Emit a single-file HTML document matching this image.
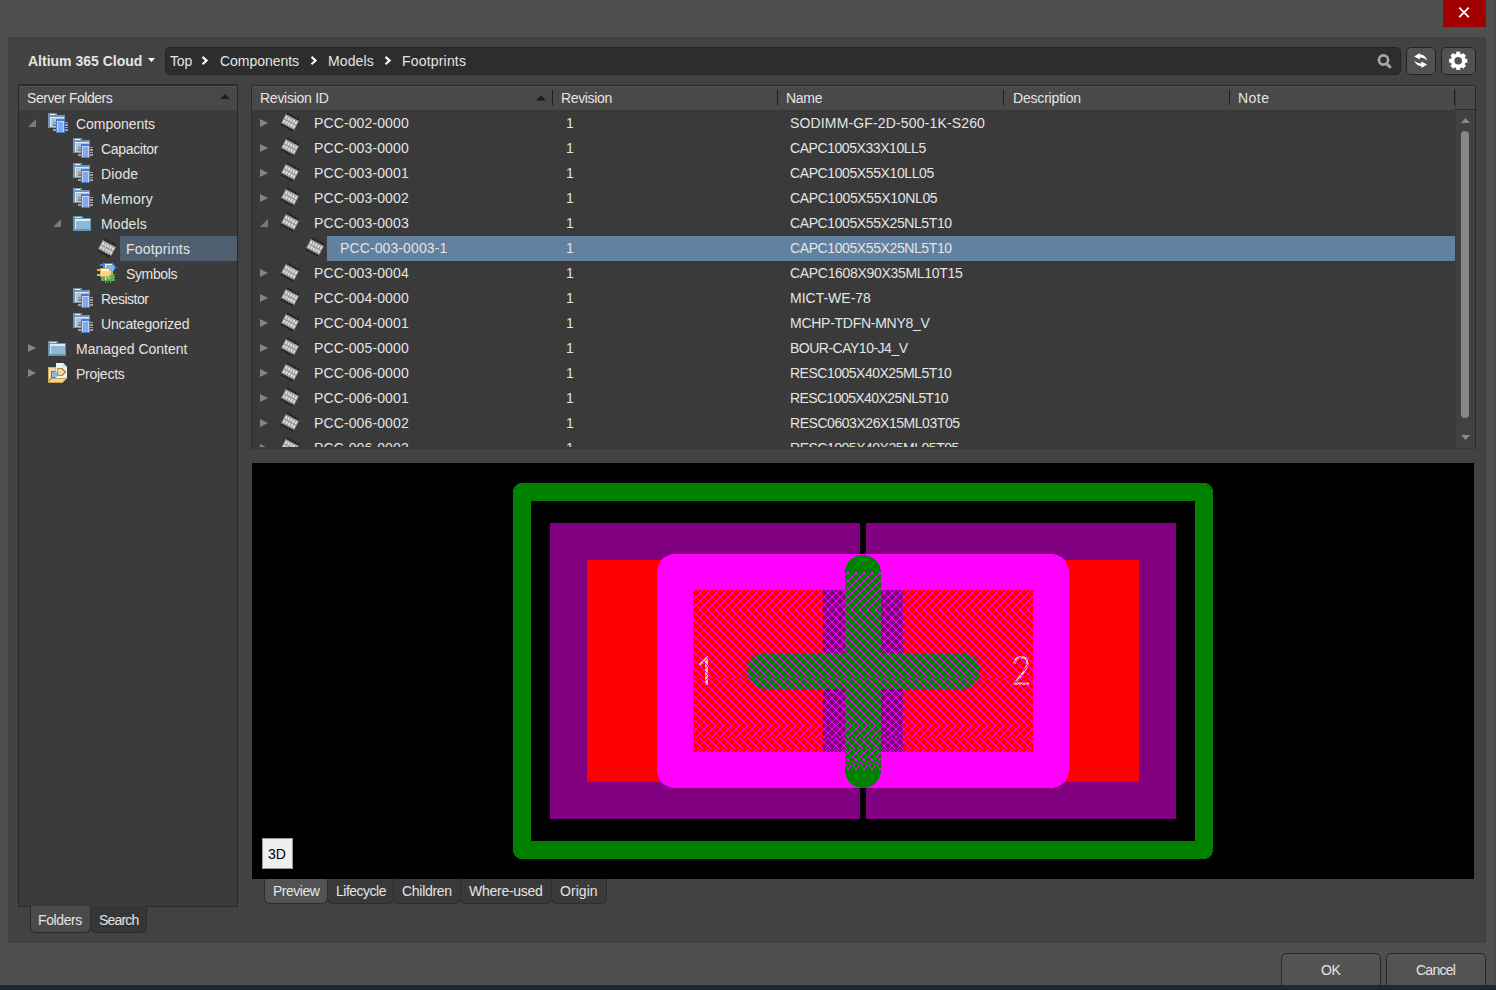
<!DOCTYPE html><html><head><meta charset="utf-8"><style>
html,body{margin:0;padding:0;}
body{width:1496px;height:990px;position:relative;overflow:hidden;background:#4f4f4f;font-family:"Liberation Sans",sans-serif;font-size:14px;}
.t{position:absolute;white-space:nowrap;line-height:20px;height:20px;}
svg{display:block}
</style></head><body><div style="position:absolute;left:0px;top:985px;width:1496px;height:5px;background:#1d2a2e"></div><div style="position:absolute;left:1494px;top:0px;width:2px;height:985px;background:#474747"></div><div style="position:absolute;left:1443px;top:0px;width:43px;height:27px;background:#a00000"></div><svg style="position:absolute;left:1443px;top:0" width="43" height="27"><path d="M16.2 7.6L25.8 17.2M25.8 7.6L16.2 17.2" stroke="#fff" stroke-width="1.8"/></svg><div style="position:absolute;left:8px;top:37px;width:1478px;height:906px;background:#424242"></div><div class="t" style="left:28px;top:51.15px;color:#e4e4e4;font-size:14px;font-weight:bold;letter-spacing:0.0px;">Altium 365 Cloud</div><svg style="position:absolute;left:148px;top:58px" width="7" height="5"><path d="M0 0H7L3.5 4Z" fill="#fff"/></svg><div style="position:absolute;left:165px;top:47px;width:1236px;height:28px;background:#2d2d2d;border:1px solid #242424;border-radius:5px;box-sizing:border-box"></div><div class="t" style="left:170px;top:51.15px;color:#e4e4e4;font-size:14px;font-weight:normal;letter-spacing:-0.2px;">Top</div><svg style="position:absolute;left:201px;top:56px" width="9" height="11"><path d="M1.5 0.9L5.6 4.6L1.5 8.3" stroke="#f4f4f4" stroke-width="2.2" fill="none"/></svg><svg style="position:absolute;left:309.5px;top:56px" width="9" height="11"><path d="M1.5 0.9L5.6 4.6L1.5 8.3" stroke="#f4f4f4" stroke-width="2.2" fill="none"/></svg><svg style="position:absolute;left:383.5px;top:56px" width="9" height="11"><path d="M1.5 0.9L5.6 4.6L1.5 8.3" stroke="#f4f4f4" stroke-width="2.2" fill="none"/></svg><div class="t" style="left:220px;top:51.15px;color:#e4e4e4;font-size:14px;font-weight:normal;letter-spacing:-0.033px;">Components</div><div class="t" style="left:328px;top:51.15px;color:#e4e4e4;font-size:14px;font-weight:normal;letter-spacing:0.12px;">Models</div><div class="t" style="left:402px;top:51.15px;color:#e4e4e4;font-size:14px;font-weight:normal;letter-spacing:0.189px;">Footprints</div><svg style="position:absolute;left:1374px;top:51px" width="20" height="20"><circle cx="9.5" cy="9" r="4.6" stroke="#a8a8a8" stroke-width="2.6" fill="none"/><path d="M12.5 12.5L16 16" stroke="#a8a8a8" stroke-width="3" stroke-linecap="round"/></svg><div style="position:absolute;left:1406px;top:47px;width:30px;height:28px;background:#525252;border:1px solid #222;border-radius:5px;box-sizing:border-box"></div><svg style="position:absolute;left:1406px;top:47px" width="30" height="28">
<path d="M8.2 9.4L13.8 5.9V12.5Z" fill="#fff"/>
<path d="M13 7.4C16.8 7.2 20 8.8 21.2 13.8C19.6 11.4 17 10.2 13 10.4Z" fill="#fff"/>
<path d="M21.1 17.4L15.4 14.6V21Z" fill="#fff"/>
<path d="M8.2 13.2C9.2 17 11.8 18.8 16 19.2V16.5C12.6 16.4 10 15.8 8.2 13.2Z" fill="#fff"/>
</svg><div style="position:absolute;left:1441px;top:47px;width:35px;height:28px;background:#525252;border:1px solid #222;border-radius:5px;box-sizing:border-box"></div><svg style="position:absolute;left:1441px;top:47px" width="35" height="28"><g transform="translate(17.2 13.8)" fill="#fff"><circle r="7.4"/><rect x="-2" y="-9.1" width="4" height="4" transform="rotate(0)"/><rect x="-2" y="-9.1" width="4" height="4" transform="rotate(45)"/><rect x="-2" y="-9.1" width="4" height="4" transform="rotate(90)"/><rect x="-2" y="-9.1" width="4" height="4" transform="rotate(135)"/><rect x="-2" y="-9.1" width="4" height="4" transform="rotate(180)"/><rect x="-2" y="-9.1" width="4" height="4" transform="rotate(225)"/><rect x="-2" y="-9.1" width="4" height="4" transform="rotate(270)"/><rect x="-2" y="-9.1" width="4" height="4" transform="rotate(315)"/></g><circle cx="17.2" cy="13.8" r="3.8" fill="#525252"/></svg><div style="position:absolute;left:18px;top:84px;width:220px;height:823px;background:#3b3b3b;border:1px solid #2a2a2a;border-top:2px solid #2c2c2c;box-sizing:border-box"></div><div style="position:absolute;left:19px;top:86px;width:218px;height:24px;background:#484848;border-top:1px solid #555;box-sizing:border-box"></div><div class="t" style="left:27px;top:88.15px;color:#e4e4e4;font-size:14px;font-weight:normal;letter-spacing:-0.462px;">Server Folders</div><svg style="position:absolute;left:220px;top:94px" width="10" height="5"><path d="M0 5H10L5 0Z" fill="#1e1e1e"/></svg><svg style="position:absolute;left:28px;top:119px" width="8" height="8"><path d="M8 0L8 8L0 8Z" fill="#7a7a7a"/></svg><svg style="position:absolute;left:48px;top:113px" width="20" height="21" shape-rendering="crispEdges">
<rect x="0" y="0" width="9" height="3" fill="#6f94b3"/>
<rect x="0" y="2" width="17" height="13" fill="#6f94b3"/>
<rect x="2" y="4" width="14" height="10" fill="#dfe8f0"/>
<rect x="3" y="5" width="13" height="9" fill="#a9c3da"/>
<rect x="2" y="1" width="5" height="1" fill="#f0f4f8"/>
<rect x="5" y="9" width="3" height="1" fill="#8a8070"/>
<rect x="5" y="11" width="3" height="2" fill="#8a8070"/>
<rect x="5" y="14" width="3" height="1" fill="#9a9a9a"/>
<rect x="5" y="16" width="3" height="2" fill="#a0a0a0"/>
<rect x="17" y="9" width="3" height="1" fill="#a0a0a0"/>
<rect x="17" y="11" width="3" height="2" fill="#a0a0a0"/>
<rect x="17" y="14" width="3" height="1" fill="#a0a0a0"/>
<rect x="17" y="16" width="3" height="2" fill="#a0a0a0"/>
<rect x="8" y="6" width="9" height="14" fill="#4a78d8"/>
<rect x="9" y="8" width="7" height="11" fill="#c6d2f6"/>
<rect x="10" y="9" width="5" height="10" fill="#84a8ec"/>
</svg><div class="t" style="left:76px;top:114.15px;color:#e4e4e4;font-size:14px;font-weight:normal;letter-spacing:-0.033px;">Components</div><svg style="position:absolute;left:73px;top:138px" width="20" height="21" shape-rendering="crispEdges">
<rect x="0" y="0" width="9" height="3" fill="#6f94b3"/>
<rect x="0" y="2" width="17" height="13" fill="#6f94b3"/>
<rect x="2" y="4" width="14" height="10" fill="#dfe8f0"/>
<rect x="3" y="5" width="13" height="9" fill="#a9c3da"/>
<rect x="2" y="1" width="5" height="1" fill="#f0f4f8"/>
<rect x="5" y="9" width="3" height="1" fill="#8a8070"/>
<rect x="5" y="11" width="3" height="2" fill="#8a8070"/>
<rect x="5" y="14" width="3" height="1" fill="#9a9a9a"/>
<rect x="5" y="16" width="3" height="2" fill="#a0a0a0"/>
<rect x="17" y="9" width="3" height="1" fill="#a0a0a0"/>
<rect x="17" y="11" width="3" height="2" fill="#a0a0a0"/>
<rect x="17" y="14" width="3" height="1" fill="#a0a0a0"/>
<rect x="17" y="16" width="3" height="2" fill="#a0a0a0"/>
<rect x="8" y="6" width="9" height="14" fill="#4a78d8"/>
<rect x="9" y="8" width="7" height="11" fill="#c6d2f6"/>
<rect x="10" y="9" width="5" height="10" fill="#84a8ec"/>
</svg><div class="t" style="left:101px;top:139.15px;color:#e4e4e4;font-size:14px;font-weight:normal;letter-spacing:-0.325px;">Capacitor</div><svg style="position:absolute;left:73px;top:163px" width="20" height="21" shape-rendering="crispEdges">
<rect x="0" y="0" width="9" height="3" fill="#6f94b3"/>
<rect x="0" y="2" width="17" height="13" fill="#6f94b3"/>
<rect x="2" y="4" width="14" height="10" fill="#dfe8f0"/>
<rect x="3" y="5" width="13" height="9" fill="#a9c3da"/>
<rect x="2" y="1" width="5" height="1" fill="#f0f4f8"/>
<rect x="5" y="9" width="3" height="1" fill="#8a8070"/>
<rect x="5" y="11" width="3" height="2" fill="#8a8070"/>
<rect x="5" y="14" width="3" height="1" fill="#9a9a9a"/>
<rect x="5" y="16" width="3" height="2" fill="#a0a0a0"/>
<rect x="17" y="9" width="3" height="1" fill="#a0a0a0"/>
<rect x="17" y="11" width="3" height="2" fill="#a0a0a0"/>
<rect x="17" y="14" width="3" height="1" fill="#a0a0a0"/>
<rect x="17" y="16" width="3" height="2" fill="#a0a0a0"/>
<rect x="8" y="6" width="9" height="14" fill="#4a78d8"/>
<rect x="9" y="8" width="7" height="11" fill="#c6d2f6"/>
<rect x="10" y="9" width="5" height="10" fill="#84a8ec"/>
</svg><div class="t" style="left:101px;top:164.15px;color:#e4e4e4;font-size:14px;font-weight:normal;letter-spacing:0.125px;">Diode</div><svg style="position:absolute;left:73px;top:188px" width="20" height="21" shape-rendering="crispEdges">
<rect x="0" y="0" width="9" height="3" fill="#6f94b3"/>
<rect x="0" y="2" width="17" height="13" fill="#6f94b3"/>
<rect x="2" y="4" width="14" height="10" fill="#dfe8f0"/>
<rect x="3" y="5" width="13" height="9" fill="#a9c3da"/>
<rect x="2" y="1" width="5" height="1" fill="#f0f4f8"/>
<rect x="5" y="9" width="3" height="1" fill="#8a8070"/>
<rect x="5" y="11" width="3" height="2" fill="#8a8070"/>
<rect x="5" y="14" width="3" height="1" fill="#9a9a9a"/>
<rect x="5" y="16" width="3" height="2" fill="#a0a0a0"/>
<rect x="17" y="9" width="3" height="1" fill="#a0a0a0"/>
<rect x="17" y="11" width="3" height="2" fill="#a0a0a0"/>
<rect x="17" y="14" width="3" height="1" fill="#a0a0a0"/>
<rect x="17" y="16" width="3" height="2" fill="#a0a0a0"/>
<rect x="8" y="6" width="9" height="14" fill="#4a78d8"/>
<rect x="9" y="8" width="7" height="11" fill="#c6d2f6"/>
<rect x="10" y="9" width="5" height="10" fill="#84a8ec"/>
</svg><div class="t" style="left:101px;top:189.15px;color:#e4e4e4;font-size:14px;font-weight:normal;letter-spacing:0.26px;">Memory</div><svg style="position:absolute;left:53px;top:219px" width="8" height="8"><path d="M8 0L8 8L0 8Z" fill="#7a7a7a"/></svg><svg style="position:absolute;left:73px;top:216px" width="19" height="16" shape-rendering="crispEdges">
<rect x="0" y="0" width="10" height="3" fill="#5e98ae"/>
<rect x="0" y="2" width="18" height="13" fill="#5e98ae"/>
<rect x="2" y="1" width="6" height="1" fill="#dfe8f0"/>
<rect x="2" y="3" width="15" height="10" fill="#e2e9f0"/>
<rect x="3" y="5" width="14" height="8" fill="#91b6d8"/>
</svg><div class="t" style="left:101px;top:214.15px;color:#e4e4e4;font-size:14px;font-weight:normal;letter-spacing:0.12px;">Models</div><div style="position:absolute;left:120px;top:236px;width:117px;height:25px;background:#4e6070"></div><svg style="position:absolute;left:97px;top:238px" width="20" height="20">
<g transform="translate(10 10) rotate(28)">
<g fill="#161616"><rect x="-6.25" y="-7.4" width="1.3" height="2.4"/><rect x="-6.25" y="5.0" width="1.3" height="2.4"/><rect x="-3.45" y="-7.4" width="1.3" height="2.4"/><rect x="-3.45" y="5.0" width="1.3" height="2.4"/><rect x="-0.65" y="-7.4" width="1.3" height="2.4"/><rect x="-0.65" y="5.0" width="1.3" height="2.4"/><rect x="2.15" y="-7.4" width="1.3" height="2.4"/><rect x="2.15" y="5.0" width="1.3" height="2.4"/><rect x="4.95" y="-7.4" width="1.3" height="2.4"/><rect x="4.95" y="5.0" width="1.3" height="2.4"/></g>
<rect x="-7.4" y="-5" width="14.8" height="10" fill="#9c9c9c"/>
<g fill="#e4e4e4"><rect x="-6.3" y="-3.6" width="1.7" height="2.8"/><rect x="-6.3" y="0.8" width="1.7" height="2.8"/><rect x="-3.5" y="-3.6" width="1.7" height="2.8"/><rect x="-3.5" y="0.8" width="1.7" height="2.8"/><rect x="-0.7" y="-3.6" width="1.7" height="2.8"/><rect x="-0.7" y="0.8" width="1.7" height="2.8"/><rect x="2.1" y="-3.6" width="1.7" height="2.8"/><rect x="2.1" y="0.8" width="1.7" height="2.8"/><rect x="4.9" y="-3.6" width="1.7" height="2.8"/><rect x="4.9" y="0.8" width="1.7" height="2.8"/></g>
</g></svg><div class="t" style="left:126px;top:239.15px;color:#e4e4e4;font-size:14px;font-weight:normal;letter-spacing:0.189px;">Footprints</div><svg style="position:absolute;left:94px;top:260px" width="26" height="26" shape-rendering="crispEdges">
<rect x="6" y="4" width="3" height="2" fill="#2f86f0"/>
<rect x="21" y="7" width="2" height="1" fill="#2f86f0"/>
<path d="M9 3H19L21 6V9L19 12H9Z" fill="#3a8cf2"/>
<path d="M11 4H18L20 7V9L18 11H11Z" fill="#7ab6fa"/>
<rect x="11" y="4" width="7" height="1" fill="#e6f0fc"/>
<rect x="11" y="4" width="1" height="5" fill="#e6f0fc"/>
<rect x="7" y="14" width="14" height="7" fill="#5cb04a"/>
<rect x="11" y="17" width="6" height="2" fill="#84c074"/>
<rect x="11" y="17" width="1" height="3" fill="#d0e8c8"/>
<rect x="20" y="15" width="1" height="1" fill="#3b3b3b"/>
<rect x="20" y="18" width="1" height="1" fill="#3b3b3b"/>
<rect x="11" y="21" width="1" height="2" fill="#5cb04a"/>
<rect x="13" y="21" width="1" height="2" fill="#5cb04a"/>
<rect x="16" y="21" width="1" height="2" fill="#5cb04a"/>
<rect x="3" y="9" width="3" height="2" fill="#d9b470"/>
<rect x="3" y="14" width="3" height="2" fill="#d9b470"/>
<path d="M6 8H16L19 12V13L16 17H6Z" fill="#cfa660"/>
<path d="M7 9H15L17 12V13L15 16H7Z" fill="#f0d888"/>
<rect x="7" y="9" width="8" height="2" fill="#fdf4d8"/>
<rect x="7" y="9" width="1" height="7" fill="#fdf4d8"/>
</svg><div class="t" style="left:126px;top:264.15px;color:#e4e4e4;font-size:14px;font-weight:normal;letter-spacing:-0.367px;">Symbols</div><svg style="position:absolute;left:73px;top:288px" width="20" height="21" shape-rendering="crispEdges">
<rect x="0" y="0" width="9" height="3" fill="#6f94b3"/>
<rect x="0" y="2" width="17" height="13" fill="#6f94b3"/>
<rect x="2" y="4" width="14" height="10" fill="#dfe8f0"/>
<rect x="3" y="5" width="13" height="9" fill="#a9c3da"/>
<rect x="2" y="1" width="5" height="1" fill="#f0f4f8"/>
<rect x="5" y="9" width="3" height="1" fill="#8a8070"/>
<rect x="5" y="11" width="3" height="2" fill="#8a8070"/>
<rect x="5" y="14" width="3" height="1" fill="#9a9a9a"/>
<rect x="5" y="16" width="3" height="2" fill="#a0a0a0"/>
<rect x="17" y="9" width="3" height="1" fill="#a0a0a0"/>
<rect x="17" y="11" width="3" height="2" fill="#a0a0a0"/>
<rect x="17" y="14" width="3" height="1" fill="#a0a0a0"/>
<rect x="17" y="16" width="3" height="2" fill="#a0a0a0"/>
<rect x="8" y="6" width="9" height="14" fill="#4a78d8"/>
<rect x="9" y="8" width="7" height="11" fill="#c6d2f6"/>
<rect x="10" y="9" width="5" height="10" fill="#84a8ec"/>
</svg><div class="t" style="left:101px;top:289.15px;color:#e4e4e4;font-size:14px;font-weight:normal;letter-spacing:-0.5px;">Resistor</div><svg style="position:absolute;left:73px;top:313px" width="20" height="21" shape-rendering="crispEdges">
<rect x="0" y="0" width="9" height="3" fill="#6f94b3"/>
<rect x="0" y="2" width="17" height="13" fill="#6f94b3"/>
<rect x="2" y="4" width="14" height="10" fill="#dfe8f0"/>
<rect x="3" y="5" width="13" height="9" fill="#a9c3da"/>
<rect x="2" y="1" width="5" height="1" fill="#f0f4f8"/>
<rect x="5" y="9" width="3" height="1" fill="#8a8070"/>
<rect x="5" y="11" width="3" height="2" fill="#8a8070"/>
<rect x="5" y="14" width="3" height="1" fill="#9a9a9a"/>
<rect x="5" y="16" width="3" height="2" fill="#a0a0a0"/>
<rect x="17" y="9" width="3" height="1" fill="#a0a0a0"/>
<rect x="17" y="11" width="3" height="2" fill="#a0a0a0"/>
<rect x="17" y="14" width="3" height="1" fill="#a0a0a0"/>
<rect x="17" y="16" width="3" height="2" fill="#a0a0a0"/>
<rect x="8" y="6" width="9" height="14" fill="#4a78d8"/>
<rect x="9" y="8" width="7" height="11" fill="#c6d2f6"/>
<rect x="10" y="9" width="5" height="10" fill="#84a8ec"/>
</svg><div class="t" style="left:101px;top:314.15px;color:#e4e4e4;font-size:14px;font-weight:normal;letter-spacing:-0.15px;">Uncategorized</div><svg style="position:absolute;left:28px;top:344px" width="8" height="8"><path d="M0 0L8 4L0 8Z" fill="#858585"/></svg><svg style="position:absolute;left:48px;top:341px" width="19" height="16" shape-rendering="crispEdges">
<rect x="0" y="0" width="10" height="3" fill="#5e98ae"/>
<rect x="0" y="2" width="18" height="13" fill="#5e98ae"/>
<rect x="2" y="1" width="6" height="1" fill="#dfe8f0"/>
<rect x="2" y="3" width="15" height="10" fill="#e2e9f0"/>
<rect x="3" y="5" width="14" height="8" fill="#91b6d8"/>
</svg><div class="t" style="left:76px;top:339.15px;color:#e4e4e4;font-size:14px;font-weight:normal;letter-spacing:0.014px;">Managed Content</div><svg style="position:absolute;left:28px;top:369px" width="8" height="8"><path d="M0 0L8 4L0 8Z" fill="#858585"/></svg><svg style="position:absolute;left:48px;top:363px" width="20" height="21" shape-rendering="crispEdges">
<path d="M8 0H15L19 4V15H8Z" fill="#e8f2fc"/>
<path d="M15 0L19 4H15Z" fill="#c8d6e4"/>
<rect x="0" y="4" width="8" height="16" fill="#d6b06a"/>
<rect x="1" y="5" width="6" height="14" fill="#f2dca0"/>
<rect x="3" y="8" width="4" height="7" fill="#2a7ae8"/>
<rect x="4" y="9" width="5" height="5" fill="#8ab8e8"/>
<path d="M9 5H14L18 9L14 13H9Z" fill="#b38a48"/>
<path d="M10 6H14L16 9L14 12H10Z" fill="#f0d890"/>
<path d="M2 15H19L15 20H0Z" fill="#c8a05a"/>
<path d="M3 16H17L14 19H2Z" fill="#f0d48a"/>
</svg><div class="t" style="left:76px;top:364.15px;color:#e4e4e4;font-size:14px;font-weight:normal;letter-spacing:-0.257px;">Projects</div><div style="position:absolute;left:30px;top:906px;width:61px;height:27px;background:#4a4a4a;border:1px solid #2c2c2c;border-top:none;border-radius:0 0 6px 6px;box-sizing:border-box"></div><div style="position:absolute;left:90px;top:906px;width:57px;height:27px;background:#363636;border:1px solid #2c2c2c;border-top:none;border-radius:0 0 6px 6px;box-sizing:border-box"></div><div class="t" style="left:38px;top:910.15px;color:#e4e4e4;font-size:14px;font-weight:normal;letter-spacing:-0.4px;">Folders</div><div class="t" style="left:99px;top:910.15px;color:#e4e4e4;font-size:14px;font-weight:normal;letter-spacing:-0.8px;">Search</div><div style="position:absolute;left:251px;top:85px;width:1225px;height:364px;background:#3a3a3a;border:1px solid #2a2a2a;border-bottom:none;box-sizing:border-box"></div><div style="position:absolute;left:252px;top:86px;width:1223px;height:24px;background:#494949;border-top:1px solid #555;box-sizing:border-box"></div><div style="position:absolute;left:1455px;top:86px;width:20px;height:24px;background:#494949;border-top:1px solid #555;border-bottom:1px solid #2a2a2a;border-left:1px solid #3a3a3a;box-sizing:border-box"></div><div style="position:absolute;left:552px;top:90px;width:1px;height:15px;background:#1e1e1e"></div><div style="position:absolute;left:777px;top:90px;width:1px;height:15px;background:#1e1e1e"></div><div style="position:absolute;left:1003px;top:90px;width:1px;height:15px;background:#1e1e1e"></div><div style="position:absolute;left:1229px;top:90px;width:1px;height:15px;background:#1e1e1e"></div><div style="position:absolute;left:1454px;top:90px;width:1px;height:15px;background:#1e1e1e"></div><div class="t" style="left:260px;top:88.15px;color:#e4e4e4;font-size:14px;font-weight:normal;letter-spacing:-0.26px;">Revision ID</div><svg style="position:absolute;left:536px;top:95px" width="10" height="6"><path d="M0 5.5H10L5 0Z" fill="#1e1e1e"/></svg><div class="t" style="left:561px;top:88.15px;color:#e4e4e4;font-size:14px;font-weight:normal;letter-spacing:-0.357px;">Revision</div><div class="t" style="left:786px;top:88.15px;color:#e4e4e4;font-size:14px;font-weight:normal;letter-spacing:-0.3px;">Name</div><div class="t" style="left:1013px;top:88.15px;color:#e4e4e4;font-size:14px;font-weight:normal;letter-spacing:-0.19px;">Description</div><div class="t" style="left:1238px;top:88.15px;color:#e4e4e4;font-size:14px;font-weight:normal;letter-spacing:0.467px;">Note</div><div style="position:absolute;left:1456px;top:110px;width:19px;height:338px;background:#414141"></div><svg style="position:absolute;left:1461px;top:118px" width="9" height="5"><path d="M0 5H9L4.5 0Z" fill="#8a8a8a"/></svg><svg style="position:absolute;left:1461px;top:435px" width="9" height="5"><path d="M0 0H9L4.5 5Z" fill="#8a8a8a"/></svg><div style="position:absolute;left:1461px;top:131px;width:8px;height:287px;background:#878787;border-radius:4px"></div><div style="position:absolute;left:252px;top:110px;width:1204px;height:337px;overflow:hidden"><svg style="position:absolute;left:8px;top:9px" width="8" height="8"><path d="M0 0L8 4L0 8Z" fill="#858585"/></svg><svg style="position:absolute;left:28px;top:2px" width="20" height="20">
<g transform="translate(10 10) rotate(28)">
<g fill="#161616"><rect x="-6.25" y="-7.4" width="1.3" height="2.4"/><rect x="-6.25" y="5.0" width="1.3" height="2.4"/><rect x="-3.45" y="-7.4" width="1.3" height="2.4"/><rect x="-3.45" y="5.0" width="1.3" height="2.4"/><rect x="-0.65" y="-7.4" width="1.3" height="2.4"/><rect x="-0.65" y="5.0" width="1.3" height="2.4"/><rect x="2.15" y="-7.4" width="1.3" height="2.4"/><rect x="2.15" y="5.0" width="1.3" height="2.4"/><rect x="4.95" y="-7.4" width="1.3" height="2.4"/><rect x="4.95" y="5.0" width="1.3" height="2.4"/></g>
<rect x="-7.4" y="-5" width="14.8" height="10" fill="#9c9c9c"/>
<g fill="#e4e4e4"><rect x="-6.3" y="-3.6" width="1.7" height="2.8"/><rect x="-6.3" y="0.8" width="1.7" height="2.8"/><rect x="-3.5" y="-3.6" width="1.7" height="2.8"/><rect x="-3.5" y="0.8" width="1.7" height="2.8"/><rect x="-0.7" y="-3.6" width="1.7" height="2.8"/><rect x="-0.7" y="0.8" width="1.7" height="2.8"/><rect x="2.1" y="-3.6" width="1.7" height="2.8"/><rect x="2.1" y="0.8" width="1.7" height="2.8"/><rect x="4.9" y="-3.6" width="1.7" height="2.8"/><rect x="4.9" y="0.8" width="1.7" height="2.8"/></g>
</g></svg><div class="t" style="left:62px;top:3.15px;color:#e4e4e4;font-size:14px;font-weight:normal;letter-spacing:0.118px;">PCC-002-0000</div><div class="t" style="left:314px;top:3.15px;color:#e4e4e4;font-size:14px;font-weight:normal;">1</div><div class="t" style="left:538px;top:3.15px;color:#e4e4e4;font-size:14px;font-weight:normal;letter-spacing:0.152px;">SODIMM-GF-2D-500-1K-S260</div><svg style="position:absolute;left:8px;top:34px" width="8" height="8"><path d="M0 0L8 4L0 8Z" fill="#858585"/></svg><svg style="position:absolute;left:28px;top:27px" width="20" height="20">
<g transform="translate(10 10) rotate(28)">
<g fill="#161616"><rect x="-6.25" y="-7.4" width="1.3" height="2.4"/><rect x="-6.25" y="5.0" width="1.3" height="2.4"/><rect x="-3.45" y="-7.4" width="1.3" height="2.4"/><rect x="-3.45" y="5.0" width="1.3" height="2.4"/><rect x="-0.65" y="-7.4" width="1.3" height="2.4"/><rect x="-0.65" y="5.0" width="1.3" height="2.4"/><rect x="2.15" y="-7.4" width="1.3" height="2.4"/><rect x="2.15" y="5.0" width="1.3" height="2.4"/><rect x="4.95" y="-7.4" width="1.3" height="2.4"/><rect x="4.95" y="5.0" width="1.3" height="2.4"/></g>
<rect x="-7.4" y="-5" width="14.8" height="10" fill="#9c9c9c"/>
<g fill="#e4e4e4"><rect x="-6.3" y="-3.6" width="1.7" height="2.8"/><rect x="-6.3" y="0.8" width="1.7" height="2.8"/><rect x="-3.5" y="-3.6" width="1.7" height="2.8"/><rect x="-3.5" y="0.8" width="1.7" height="2.8"/><rect x="-0.7" y="-3.6" width="1.7" height="2.8"/><rect x="-0.7" y="0.8" width="1.7" height="2.8"/><rect x="2.1" y="-3.6" width="1.7" height="2.8"/><rect x="2.1" y="0.8" width="1.7" height="2.8"/><rect x="4.9" y="-3.6" width="1.7" height="2.8"/><rect x="4.9" y="0.8" width="1.7" height="2.8"/></g>
</g></svg><div class="t" style="left:62px;top:28.15px;color:#e4e4e4;font-size:14px;font-weight:normal;letter-spacing:0.118px;">PCC-003-0000</div><div class="t" style="left:314px;top:28.15px;color:#e4e4e4;font-size:14px;font-weight:normal;">1</div><div class="t" style="left:538px;top:28.15px;color:#e4e4e4;font-size:14px;font-weight:normal;letter-spacing:-0.438px;">CAPC1005X33X10LL5</div><svg style="position:absolute;left:8px;top:59px" width="8" height="8"><path d="M0 0L8 4L0 8Z" fill="#858585"/></svg><svg style="position:absolute;left:28px;top:52px" width="20" height="20">
<g transform="translate(10 10) rotate(28)">
<g fill="#161616"><rect x="-6.25" y="-7.4" width="1.3" height="2.4"/><rect x="-6.25" y="5.0" width="1.3" height="2.4"/><rect x="-3.45" y="-7.4" width="1.3" height="2.4"/><rect x="-3.45" y="5.0" width="1.3" height="2.4"/><rect x="-0.65" y="-7.4" width="1.3" height="2.4"/><rect x="-0.65" y="5.0" width="1.3" height="2.4"/><rect x="2.15" y="-7.4" width="1.3" height="2.4"/><rect x="2.15" y="5.0" width="1.3" height="2.4"/><rect x="4.95" y="-7.4" width="1.3" height="2.4"/><rect x="4.95" y="5.0" width="1.3" height="2.4"/></g>
<rect x="-7.4" y="-5" width="14.8" height="10" fill="#9c9c9c"/>
<g fill="#e4e4e4"><rect x="-6.3" y="-3.6" width="1.7" height="2.8"/><rect x="-6.3" y="0.8" width="1.7" height="2.8"/><rect x="-3.5" y="-3.6" width="1.7" height="2.8"/><rect x="-3.5" y="0.8" width="1.7" height="2.8"/><rect x="-0.7" y="-3.6" width="1.7" height="2.8"/><rect x="-0.7" y="0.8" width="1.7" height="2.8"/><rect x="2.1" y="-3.6" width="1.7" height="2.8"/><rect x="2.1" y="0.8" width="1.7" height="2.8"/><rect x="4.9" y="-3.6" width="1.7" height="2.8"/><rect x="4.9" y="0.8" width="1.7" height="2.8"/></g>
</g></svg><div class="t" style="left:62px;top:53.15px;color:#e4e4e4;font-size:14px;font-weight:normal;letter-spacing:0.118px;">PCC-003-0001</div><div class="t" style="left:314px;top:53.15px;color:#e4e4e4;font-size:14px;font-weight:normal;">1</div><div class="t" style="left:538px;top:53.15px;color:#e4e4e4;font-size:14px;font-weight:normal;letter-spacing:-0.4px;">CAPC1005X55X10LL05</div><svg style="position:absolute;left:8px;top:84px" width="8" height="8"><path d="M0 0L8 4L0 8Z" fill="#858585"/></svg><svg style="position:absolute;left:28px;top:77px" width="20" height="20">
<g transform="translate(10 10) rotate(28)">
<g fill="#161616"><rect x="-6.25" y="-7.4" width="1.3" height="2.4"/><rect x="-6.25" y="5.0" width="1.3" height="2.4"/><rect x="-3.45" y="-7.4" width="1.3" height="2.4"/><rect x="-3.45" y="5.0" width="1.3" height="2.4"/><rect x="-0.65" y="-7.4" width="1.3" height="2.4"/><rect x="-0.65" y="5.0" width="1.3" height="2.4"/><rect x="2.15" y="-7.4" width="1.3" height="2.4"/><rect x="2.15" y="5.0" width="1.3" height="2.4"/><rect x="4.95" y="-7.4" width="1.3" height="2.4"/><rect x="4.95" y="5.0" width="1.3" height="2.4"/></g>
<rect x="-7.4" y="-5" width="14.8" height="10" fill="#9c9c9c"/>
<g fill="#e4e4e4"><rect x="-6.3" y="-3.6" width="1.7" height="2.8"/><rect x="-6.3" y="0.8" width="1.7" height="2.8"/><rect x="-3.5" y="-3.6" width="1.7" height="2.8"/><rect x="-3.5" y="0.8" width="1.7" height="2.8"/><rect x="-0.7" y="-3.6" width="1.7" height="2.8"/><rect x="-0.7" y="0.8" width="1.7" height="2.8"/><rect x="2.1" y="-3.6" width="1.7" height="2.8"/><rect x="2.1" y="0.8" width="1.7" height="2.8"/><rect x="4.9" y="-3.6" width="1.7" height="2.8"/><rect x="4.9" y="0.8" width="1.7" height="2.8"/></g>
</g></svg><div class="t" style="left:62px;top:78.15px;color:#e4e4e4;font-size:14px;font-weight:normal;letter-spacing:0.118px;">PCC-003-0002</div><div class="t" style="left:314px;top:78.15px;color:#e4e4e4;font-size:14px;font-weight:normal;">1</div><div class="t" style="left:538px;top:78.15px;color:#e4e4e4;font-size:14px;font-weight:normal;letter-spacing:-0.335px;">CAPC1005X55X10NL05</div><svg style="position:absolute;left:8px;top:109px" width="8" height="8"><path d="M8 0L8 8L0 8Z" fill="#7a7a7a"/></svg><svg style="position:absolute;left:28px;top:102px" width="20" height="20">
<g transform="translate(10 10) rotate(28)">
<g fill="#161616"><rect x="-6.25" y="-7.4" width="1.3" height="2.4"/><rect x="-6.25" y="5.0" width="1.3" height="2.4"/><rect x="-3.45" y="-7.4" width="1.3" height="2.4"/><rect x="-3.45" y="5.0" width="1.3" height="2.4"/><rect x="-0.65" y="-7.4" width="1.3" height="2.4"/><rect x="-0.65" y="5.0" width="1.3" height="2.4"/><rect x="2.15" y="-7.4" width="1.3" height="2.4"/><rect x="2.15" y="5.0" width="1.3" height="2.4"/><rect x="4.95" y="-7.4" width="1.3" height="2.4"/><rect x="4.95" y="5.0" width="1.3" height="2.4"/></g>
<rect x="-7.4" y="-5" width="14.8" height="10" fill="#9c9c9c"/>
<g fill="#e4e4e4"><rect x="-6.3" y="-3.6" width="1.7" height="2.8"/><rect x="-6.3" y="0.8" width="1.7" height="2.8"/><rect x="-3.5" y="-3.6" width="1.7" height="2.8"/><rect x="-3.5" y="0.8" width="1.7" height="2.8"/><rect x="-0.7" y="-3.6" width="1.7" height="2.8"/><rect x="-0.7" y="0.8" width="1.7" height="2.8"/><rect x="2.1" y="-3.6" width="1.7" height="2.8"/><rect x="2.1" y="0.8" width="1.7" height="2.8"/><rect x="4.9" y="-3.6" width="1.7" height="2.8"/><rect x="4.9" y="0.8" width="1.7" height="2.8"/></g>
</g></svg><div class="t" style="left:62px;top:103.15px;color:#e4e4e4;font-size:14px;font-weight:normal;letter-spacing:0.118px;">PCC-003-0003</div><div class="t" style="left:314px;top:103.15px;color:#e4e4e4;font-size:14px;font-weight:normal;">1</div><div class="t" style="left:538px;top:103.15px;color:#e4e4e4;font-size:14px;font-weight:normal;letter-spacing:-0.4px;">CAPC1005X55X25NL5T10</div><div style="position:absolute;left:75px;top:126px;width:1128px;height:25px;background:#62809f"></div><svg style="position:absolute;left:53px;top:127px" width="20" height="20">
<g transform="translate(10 10) rotate(28)">
<g fill="#161616"><rect x="-6.25" y="-7.4" width="1.3" height="2.4"/><rect x="-6.25" y="5.0" width="1.3" height="2.4"/><rect x="-3.45" y="-7.4" width="1.3" height="2.4"/><rect x="-3.45" y="5.0" width="1.3" height="2.4"/><rect x="-0.65" y="-7.4" width="1.3" height="2.4"/><rect x="-0.65" y="5.0" width="1.3" height="2.4"/><rect x="2.15" y="-7.4" width="1.3" height="2.4"/><rect x="2.15" y="5.0" width="1.3" height="2.4"/><rect x="4.95" y="-7.4" width="1.3" height="2.4"/><rect x="4.95" y="5.0" width="1.3" height="2.4"/></g>
<rect x="-7.4" y="-5" width="14.8" height="10" fill="#9c9c9c"/>
<g fill="#e4e4e4"><rect x="-6.3" y="-3.6" width="1.7" height="2.8"/><rect x="-6.3" y="0.8" width="1.7" height="2.8"/><rect x="-3.5" y="-3.6" width="1.7" height="2.8"/><rect x="-3.5" y="0.8" width="1.7" height="2.8"/><rect x="-0.7" y="-3.6" width="1.7" height="2.8"/><rect x="-0.7" y="0.8" width="1.7" height="2.8"/><rect x="2.1" y="-3.6" width="1.7" height="2.8"/><rect x="2.1" y="0.8" width="1.7" height="2.8"/><rect x="4.9" y="-3.6" width="1.7" height="2.8"/><rect x="4.9" y="0.8" width="1.7" height="2.8"/></g>
</g></svg><div class="t" style="left:88px;top:128.15px;color:#e4e4e4;font-size:14px;font-weight:normal;letter-spacing:0.108px;">PCC-003-0003-1</div><div class="t" style="left:314px;top:128.15px;color:#e4e4e4;font-size:14px;font-weight:normal;">1</div><div class="t" style="left:538px;top:128.15px;color:#e4e4e4;font-size:14px;font-weight:normal;letter-spacing:-0.4px;">CAPC1005X55X25NL5T10</div><svg style="position:absolute;left:8px;top:159px" width="8" height="8"><path d="M0 0L8 4L0 8Z" fill="#858585"/></svg><svg style="position:absolute;left:28px;top:152px" width="20" height="20">
<g transform="translate(10 10) rotate(28)">
<g fill="#161616"><rect x="-6.25" y="-7.4" width="1.3" height="2.4"/><rect x="-6.25" y="5.0" width="1.3" height="2.4"/><rect x="-3.45" y="-7.4" width="1.3" height="2.4"/><rect x="-3.45" y="5.0" width="1.3" height="2.4"/><rect x="-0.65" y="-7.4" width="1.3" height="2.4"/><rect x="-0.65" y="5.0" width="1.3" height="2.4"/><rect x="2.15" y="-7.4" width="1.3" height="2.4"/><rect x="2.15" y="5.0" width="1.3" height="2.4"/><rect x="4.95" y="-7.4" width="1.3" height="2.4"/><rect x="4.95" y="5.0" width="1.3" height="2.4"/></g>
<rect x="-7.4" y="-5" width="14.8" height="10" fill="#9c9c9c"/>
<g fill="#e4e4e4"><rect x="-6.3" y="-3.6" width="1.7" height="2.8"/><rect x="-6.3" y="0.8" width="1.7" height="2.8"/><rect x="-3.5" y="-3.6" width="1.7" height="2.8"/><rect x="-3.5" y="0.8" width="1.7" height="2.8"/><rect x="-0.7" y="-3.6" width="1.7" height="2.8"/><rect x="-0.7" y="0.8" width="1.7" height="2.8"/><rect x="2.1" y="-3.6" width="1.7" height="2.8"/><rect x="2.1" y="0.8" width="1.7" height="2.8"/><rect x="4.9" y="-3.6" width="1.7" height="2.8"/><rect x="4.9" y="0.8" width="1.7" height="2.8"/></g>
</g></svg><div class="t" style="left:62px;top:153.15px;color:#e4e4e4;font-size:14px;font-weight:normal;letter-spacing:0.118px;">PCC-003-0004</div><div class="t" style="left:314px;top:153.15px;color:#e4e4e4;font-size:14px;font-weight:normal;">1</div><div class="t" style="left:538px;top:153.15px;color:#e4e4e4;font-size:14px;font-weight:normal;letter-spacing:-0.315px;">CAPC1608X90X35ML10T15</div><svg style="position:absolute;left:8px;top:184px" width="8" height="8"><path d="M0 0L8 4L0 8Z" fill="#858585"/></svg><svg style="position:absolute;left:28px;top:177px" width="20" height="20">
<g transform="translate(10 10) rotate(28)">
<g fill="#161616"><rect x="-6.25" y="-7.4" width="1.3" height="2.4"/><rect x="-6.25" y="5.0" width="1.3" height="2.4"/><rect x="-3.45" y="-7.4" width="1.3" height="2.4"/><rect x="-3.45" y="5.0" width="1.3" height="2.4"/><rect x="-0.65" y="-7.4" width="1.3" height="2.4"/><rect x="-0.65" y="5.0" width="1.3" height="2.4"/><rect x="2.15" y="-7.4" width="1.3" height="2.4"/><rect x="2.15" y="5.0" width="1.3" height="2.4"/><rect x="4.95" y="-7.4" width="1.3" height="2.4"/><rect x="4.95" y="5.0" width="1.3" height="2.4"/></g>
<rect x="-7.4" y="-5" width="14.8" height="10" fill="#9c9c9c"/>
<g fill="#e4e4e4"><rect x="-6.3" y="-3.6" width="1.7" height="2.8"/><rect x="-6.3" y="0.8" width="1.7" height="2.8"/><rect x="-3.5" y="-3.6" width="1.7" height="2.8"/><rect x="-3.5" y="0.8" width="1.7" height="2.8"/><rect x="-0.7" y="-3.6" width="1.7" height="2.8"/><rect x="-0.7" y="0.8" width="1.7" height="2.8"/><rect x="2.1" y="-3.6" width="1.7" height="2.8"/><rect x="2.1" y="0.8" width="1.7" height="2.8"/><rect x="4.9" y="-3.6" width="1.7" height="2.8"/><rect x="4.9" y="0.8" width="1.7" height="2.8"/></g>
</g></svg><div class="t" style="left:62px;top:178.15px;color:#e4e4e4;font-size:14px;font-weight:normal;letter-spacing:0.118px;">PCC-004-0000</div><div class="t" style="left:314px;top:178.15px;color:#e4e4e4;font-size:14px;font-weight:normal;">1</div><div class="t" style="left:538px;top:178.15px;color:#e4e4e4;font-size:14px;font-weight:normal;letter-spacing:0.0px;">MICT-WE-78</div><svg style="position:absolute;left:8px;top:209px" width="8" height="8"><path d="M0 0L8 4L0 8Z" fill="#858585"/></svg><svg style="position:absolute;left:28px;top:202px" width="20" height="20">
<g transform="translate(10 10) rotate(28)">
<g fill="#161616"><rect x="-6.25" y="-7.4" width="1.3" height="2.4"/><rect x="-6.25" y="5.0" width="1.3" height="2.4"/><rect x="-3.45" y="-7.4" width="1.3" height="2.4"/><rect x="-3.45" y="5.0" width="1.3" height="2.4"/><rect x="-0.65" y="-7.4" width="1.3" height="2.4"/><rect x="-0.65" y="5.0" width="1.3" height="2.4"/><rect x="2.15" y="-7.4" width="1.3" height="2.4"/><rect x="2.15" y="5.0" width="1.3" height="2.4"/><rect x="4.95" y="-7.4" width="1.3" height="2.4"/><rect x="4.95" y="5.0" width="1.3" height="2.4"/></g>
<rect x="-7.4" y="-5" width="14.8" height="10" fill="#9c9c9c"/>
<g fill="#e4e4e4"><rect x="-6.3" y="-3.6" width="1.7" height="2.8"/><rect x="-6.3" y="0.8" width="1.7" height="2.8"/><rect x="-3.5" y="-3.6" width="1.7" height="2.8"/><rect x="-3.5" y="0.8" width="1.7" height="2.8"/><rect x="-0.7" y="-3.6" width="1.7" height="2.8"/><rect x="-0.7" y="0.8" width="1.7" height="2.8"/><rect x="2.1" y="-3.6" width="1.7" height="2.8"/><rect x="2.1" y="0.8" width="1.7" height="2.8"/><rect x="4.9" y="-3.6" width="1.7" height="2.8"/><rect x="4.9" y="0.8" width="1.7" height="2.8"/></g>
</g></svg><div class="t" style="left:62px;top:203.15px;color:#e4e4e4;font-size:14px;font-weight:normal;letter-spacing:0.118px;">PCC-004-0001</div><div class="t" style="left:314px;top:203.15px;color:#e4e4e4;font-size:14px;font-weight:normal;">1</div><div class="t" style="left:538px;top:203.15px;color:#e4e4e4;font-size:14px;font-weight:normal;letter-spacing:-0.267px;">MCHP-TDFN-MNY8_V</div><svg style="position:absolute;left:8px;top:234px" width="8" height="8"><path d="M0 0L8 4L0 8Z" fill="#858585"/></svg><svg style="position:absolute;left:28px;top:227px" width="20" height="20">
<g transform="translate(10 10) rotate(28)">
<g fill="#161616"><rect x="-6.25" y="-7.4" width="1.3" height="2.4"/><rect x="-6.25" y="5.0" width="1.3" height="2.4"/><rect x="-3.45" y="-7.4" width="1.3" height="2.4"/><rect x="-3.45" y="5.0" width="1.3" height="2.4"/><rect x="-0.65" y="-7.4" width="1.3" height="2.4"/><rect x="-0.65" y="5.0" width="1.3" height="2.4"/><rect x="2.15" y="-7.4" width="1.3" height="2.4"/><rect x="2.15" y="5.0" width="1.3" height="2.4"/><rect x="4.95" y="-7.4" width="1.3" height="2.4"/><rect x="4.95" y="5.0" width="1.3" height="2.4"/></g>
<rect x="-7.4" y="-5" width="14.8" height="10" fill="#9c9c9c"/>
<g fill="#e4e4e4"><rect x="-6.3" y="-3.6" width="1.7" height="2.8"/><rect x="-6.3" y="0.8" width="1.7" height="2.8"/><rect x="-3.5" y="-3.6" width="1.7" height="2.8"/><rect x="-3.5" y="0.8" width="1.7" height="2.8"/><rect x="-0.7" y="-3.6" width="1.7" height="2.8"/><rect x="-0.7" y="0.8" width="1.7" height="2.8"/><rect x="2.1" y="-3.6" width="1.7" height="2.8"/><rect x="2.1" y="0.8" width="1.7" height="2.8"/><rect x="4.9" y="-3.6" width="1.7" height="2.8"/><rect x="4.9" y="0.8" width="1.7" height="2.8"/></g>
</g></svg><div class="t" style="left:62px;top:228.15px;color:#e4e4e4;font-size:14px;font-weight:normal;letter-spacing:0.118px;">PCC-005-0000</div><div class="t" style="left:314px;top:228.15px;color:#e4e4e4;font-size:14px;font-weight:normal;">1</div><div class="t" style="left:538px;top:228.15px;color:#e4e4e4;font-size:14px;font-weight:normal;letter-spacing:-0.5px;">BOUR-CAY10-J4_V</div><svg style="position:absolute;left:8px;top:259px" width="8" height="8"><path d="M0 0L8 4L0 8Z" fill="#858585"/></svg><svg style="position:absolute;left:28px;top:252px" width="20" height="20">
<g transform="translate(10 10) rotate(28)">
<g fill="#161616"><rect x="-6.25" y="-7.4" width="1.3" height="2.4"/><rect x="-6.25" y="5.0" width="1.3" height="2.4"/><rect x="-3.45" y="-7.4" width="1.3" height="2.4"/><rect x="-3.45" y="5.0" width="1.3" height="2.4"/><rect x="-0.65" y="-7.4" width="1.3" height="2.4"/><rect x="-0.65" y="5.0" width="1.3" height="2.4"/><rect x="2.15" y="-7.4" width="1.3" height="2.4"/><rect x="2.15" y="5.0" width="1.3" height="2.4"/><rect x="4.95" y="-7.4" width="1.3" height="2.4"/><rect x="4.95" y="5.0" width="1.3" height="2.4"/></g>
<rect x="-7.4" y="-5" width="14.8" height="10" fill="#9c9c9c"/>
<g fill="#e4e4e4"><rect x="-6.3" y="-3.6" width="1.7" height="2.8"/><rect x="-6.3" y="0.8" width="1.7" height="2.8"/><rect x="-3.5" y="-3.6" width="1.7" height="2.8"/><rect x="-3.5" y="0.8" width="1.7" height="2.8"/><rect x="-0.7" y="-3.6" width="1.7" height="2.8"/><rect x="-0.7" y="0.8" width="1.7" height="2.8"/><rect x="2.1" y="-3.6" width="1.7" height="2.8"/><rect x="2.1" y="0.8" width="1.7" height="2.8"/><rect x="4.9" y="-3.6" width="1.7" height="2.8"/><rect x="4.9" y="0.8" width="1.7" height="2.8"/></g>
</g></svg><div class="t" style="left:62px;top:253.15px;color:#e4e4e4;font-size:14px;font-weight:normal;letter-spacing:0.118px;">PCC-006-0000</div><div class="t" style="left:314px;top:253.15px;color:#e4e4e4;font-size:14px;font-weight:normal;">1</div><div class="t" style="left:538px;top:253.15px;color:#e4e4e4;font-size:14px;font-weight:normal;letter-spacing:-0.495px;">RESC1005X40X25ML5T10</div><svg style="position:absolute;left:8px;top:284px" width="8" height="8"><path d="M0 0L8 4L0 8Z" fill="#858585"/></svg><svg style="position:absolute;left:28px;top:277px" width="20" height="20">
<g transform="translate(10 10) rotate(28)">
<g fill="#161616"><rect x="-6.25" y="-7.4" width="1.3" height="2.4"/><rect x="-6.25" y="5.0" width="1.3" height="2.4"/><rect x="-3.45" y="-7.4" width="1.3" height="2.4"/><rect x="-3.45" y="5.0" width="1.3" height="2.4"/><rect x="-0.65" y="-7.4" width="1.3" height="2.4"/><rect x="-0.65" y="5.0" width="1.3" height="2.4"/><rect x="2.15" y="-7.4" width="1.3" height="2.4"/><rect x="2.15" y="5.0" width="1.3" height="2.4"/><rect x="4.95" y="-7.4" width="1.3" height="2.4"/><rect x="4.95" y="5.0" width="1.3" height="2.4"/></g>
<rect x="-7.4" y="-5" width="14.8" height="10" fill="#9c9c9c"/>
<g fill="#e4e4e4"><rect x="-6.3" y="-3.6" width="1.7" height="2.8"/><rect x="-6.3" y="0.8" width="1.7" height="2.8"/><rect x="-3.5" y="-3.6" width="1.7" height="2.8"/><rect x="-3.5" y="0.8" width="1.7" height="2.8"/><rect x="-0.7" y="-3.6" width="1.7" height="2.8"/><rect x="-0.7" y="0.8" width="1.7" height="2.8"/><rect x="2.1" y="-3.6" width="1.7" height="2.8"/><rect x="2.1" y="0.8" width="1.7" height="2.8"/><rect x="4.9" y="-3.6" width="1.7" height="2.8"/><rect x="4.9" y="0.8" width="1.7" height="2.8"/></g>
</g></svg><div class="t" style="left:62px;top:278.15px;color:#e4e4e4;font-size:14px;font-weight:normal;letter-spacing:0.118px;">PCC-006-0001</div><div class="t" style="left:314px;top:278.15px;color:#e4e4e4;font-size:14px;font-weight:normal;">1</div><div class="t" style="left:538px;top:278.15px;color:#e4e4e4;font-size:14px;font-weight:normal;letter-spacing:-0.584px;">RESC1005X40X25NL5T10</div><svg style="position:absolute;left:8px;top:309px" width="8" height="8"><path d="M0 0L8 4L0 8Z" fill="#858585"/></svg><svg style="position:absolute;left:28px;top:302px" width="20" height="20">
<g transform="translate(10 10) rotate(28)">
<g fill="#161616"><rect x="-6.25" y="-7.4" width="1.3" height="2.4"/><rect x="-6.25" y="5.0" width="1.3" height="2.4"/><rect x="-3.45" y="-7.4" width="1.3" height="2.4"/><rect x="-3.45" y="5.0" width="1.3" height="2.4"/><rect x="-0.65" y="-7.4" width="1.3" height="2.4"/><rect x="-0.65" y="5.0" width="1.3" height="2.4"/><rect x="2.15" y="-7.4" width="1.3" height="2.4"/><rect x="2.15" y="5.0" width="1.3" height="2.4"/><rect x="4.95" y="-7.4" width="1.3" height="2.4"/><rect x="4.95" y="5.0" width="1.3" height="2.4"/></g>
<rect x="-7.4" y="-5" width="14.8" height="10" fill="#9c9c9c"/>
<g fill="#e4e4e4"><rect x="-6.3" y="-3.6" width="1.7" height="2.8"/><rect x="-6.3" y="0.8" width="1.7" height="2.8"/><rect x="-3.5" y="-3.6" width="1.7" height="2.8"/><rect x="-3.5" y="0.8" width="1.7" height="2.8"/><rect x="-0.7" y="-3.6" width="1.7" height="2.8"/><rect x="-0.7" y="0.8" width="1.7" height="2.8"/><rect x="2.1" y="-3.6" width="1.7" height="2.8"/><rect x="2.1" y="0.8" width="1.7" height="2.8"/><rect x="4.9" y="-3.6" width="1.7" height="2.8"/><rect x="4.9" y="0.8" width="1.7" height="2.8"/></g>
</g></svg><div class="t" style="left:62px;top:303.15px;color:#e4e4e4;font-size:14px;font-weight:normal;letter-spacing:0.118px;">PCC-006-0002</div><div class="t" style="left:314px;top:303.15px;color:#e4e4e4;font-size:14px;font-weight:normal;">1</div><div class="t" style="left:538px;top:303.15px;color:#e4e4e4;font-size:14px;font-weight:normal;letter-spacing:-0.45px;">RESC0603X26X15ML03T05</div><svg style="position:absolute;left:8px;top:334px" width="8" height="8"><path d="M0 0L8 4L0 8Z" fill="#858585"/></svg><svg style="position:absolute;left:28px;top:327px" width="20" height="20">
<g transform="translate(10 10) rotate(28)">
<g fill="#161616"><rect x="-6.25" y="-7.4" width="1.3" height="2.4"/><rect x="-6.25" y="5.0" width="1.3" height="2.4"/><rect x="-3.45" y="-7.4" width="1.3" height="2.4"/><rect x="-3.45" y="5.0" width="1.3" height="2.4"/><rect x="-0.65" y="-7.4" width="1.3" height="2.4"/><rect x="-0.65" y="5.0" width="1.3" height="2.4"/><rect x="2.15" y="-7.4" width="1.3" height="2.4"/><rect x="2.15" y="5.0" width="1.3" height="2.4"/><rect x="4.95" y="-7.4" width="1.3" height="2.4"/><rect x="4.95" y="5.0" width="1.3" height="2.4"/></g>
<rect x="-7.4" y="-5" width="14.8" height="10" fill="#9c9c9c"/>
<g fill="#e4e4e4"><rect x="-6.3" y="-3.6" width="1.7" height="2.8"/><rect x="-6.3" y="0.8" width="1.7" height="2.8"/><rect x="-3.5" y="-3.6" width="1.7" height="2.8"/><rect x="-3.5" y="0.8" width="1.7" height="2.8"/><rect x="-0.7" y="-3.6" width="1.7" height="2.8"/><rect x="-0.7" y="0.8" width="1.7" height="2.8"/><rect x="2.1" y="-3.6" width="1.7" height="2.8"/><rect x="2.1" y="0.8" width="1.7" height="2.8"/><rect x="4.9" y="-3.6" width="1.7" height="2.8"/><rect x="4.9" y="0.8" width="1.7" height="2.8"/></g>
</g></svg><div class="t" style="left:62px;top:328.15px;color:#e4e4e4;font-size:14px;font-weight:normal;letter-spacing:0.118px;">PCC-006-0003</div><div class="t" style="left:314px;top:328.15px;color:#e4e4e4;font-size:14px;font-weight:normal;">1</div><div class="t" style="left:538px;top:328.15px;color:#e4e4e4;font-size:14px;font-weight:normal;letter-spacing:-0.485px;">RESC1005X40X25ML05T05</div></div><svg style="position:absolute;left:252px;top:463px" width="1222" height="416" viewBox="252 463 1222 416" shape-rendering="crispEdges">
<defs>
<pattern id="hp" patternUnits="userSpaceOnUse" x="0" y="572" width="8" height="198"><g fill="#ff00ff"><rect x="0" y="0" width="1" height="1"/><rect x="7" y="0" width="1" height="1"/><rect x="0" y="1" width="1" height="1"/><rect x="7" y="1" width="1" height="1"/><rect x="1" y="2" width="1" height="1"/><rect x="6" y="2" width="1" height="1"/><rect x="2" y="3" width="1" height="1"/><rect x="5" y="3" width="1" height="1"/><rect x="3" y="4" width="2" height="1"/><rect x="3" y="5" width="2" height="1"/><rect x="2" y="6" width="1" height="1"/><rect x="5" y="6" width="1" height="1"/><rect x="1" y="7" width="1" height="1"/><rect x="6" y="7" width="1" height="1"/><rect x="0" y="8" width="1" height="1"/><rect x="7" y="8" width="1" height="1"/><rect x="0" y="9" width="1" height="1"/><rect x="7" y="9" width="1" height="1"/><rect x="1" y="10" width="1" height="1"/><rect x="6" y="10" width="1" height="1"/><rect x="2" y="11" width="1" height="1"/><rect x="5" y="11" width="1" height="1"/><rect x="3" y="12" width="2" height="1"/><rect x="3" y="13" width="2" height="1"/><rect x="2" y="14" width="1" height="1"/><rect x="5" y="14" width="1" height="1"/><rect x="1" y="15" width="1" height="1"/><rect x="6" y="15" width="1" height="1"/><rect x="0" y="16" width="1" height="1"/><rect x="7" y="16" width="1" height="1"/><rect x="0" y="17" width="1" height="1"/><rect x="7" y="17" width="1" height="1"/><rect x="1" y="18" width="1" height="1"/><rect x="6" y="18" width="1" height="1"/><rect x="2" y="19" width="1" height="1"/><rect x="5" y="19" width="1" height="1"/><rect x="3" y="20" width="2" height="1"/><rect x="3" y="21" width="2" height="1"/><rect x="2" y="22" width="1" height="1"/><rect x="5" y="22" width="1" height="1"/><rect x="1" y="23" width="1" height="1"/><rect x="6" y="23" width="1" height="1"/><rect x="0" y="24" width="1" height="1"/><rect x="7" y="24" width="1" height="1"/><rect x="0" y="25" width="1" height="1"/><rect x="7" y="25" width="1" height="1"/><rect x="1" y="26" width="1" height="1"/><rect x="6" y="26" width="1" height="1"/><rect x="2" y="27" width="1" height="1"/><rect x="5" y="27" width="1" height="1"/><rect x="3" y="28" width="2" height="1"/><rect x="3" y="29" width="2" height="1"/><rect x="2" y="30" width="1" height="1"/><rect x="5" y="30" width="1" height="1"/><rect x="1" y="31" width="1" height="1"/><rect x="6" y="31" width="1" height="1"/><rect x="0" y="32" width="1" height="1"/><rect x="7" y="32" width="1" height="1"/><rect x="0" y="33" width="1" height="1"/><rect x="7" y="33" width="1" height="1"/><rect x="1" y="34" width="1" height="1"/><rect x="6" y="34" width="1" height="1"/><rect x="2" y="35" width="1" height="1"/><rect x="5" y="35" width="1" height="1"/><rect x="3" y="36" width="2" height="1"/><rect x="3" y="37" width="2" height="1"/><rect x="3" y="38" width="2" height="1"/><rect x="2" y="39" width="1" height="1"/><rect x="5" y="39" width="1" height="1"/><rect x="1" y="40" width="1" height="1"/><rect x="6" y="40" width="1" height="1"/><rect x="0" y="41" width="1" height="1"/><rect x="7" y="41" width="1" height="1"/><rect x="0" y="42" width="1" height="1"/><rect x="7" y="42" width="1" height="1"/><rect x="1" y="43" width="1" height="1"/><rect x="6" y="43" width="1" height="1"/><rect x="2" y="44" width="1" height="1"/><rect x="5" y="44" width="1" height="1"/><rect x="3" y="45" width="2" height="1"/><rect x="3" y="46" width="2" height="1"/><rect x="2" y="47" width="1" height="1"/><rect x="5" y="47" width="1" height="1"/><rect x="1" y="48" width="1" height="1"/><rect x="6" y="48" width="1" height="1"/><rect x="0" y="49" width="1" height="1"/><rect x="7" y="49" width="1" height="1"/><rect x="0" y="50" width="1" height="1"/><rect x="7" y="50" width="1" height="1"/><rect x="1" y="51" width="1" height="1"/><rect x="6" y="51" width="1" height="1"/><rect x="2" y="52" width="1" height="1"/><rect x="5" y="52" width="1" height="1"/><rect x="3" y="53" width="2" height="1"/><rect x="3" y="54" width="2" height="1"/><rect x="2" y="55" width="1" height="1"/><rect x="5" y="55" width="1" height="1"/><rect x="1" y="56" width="1" height="1"/><rect x="6" y="56" width="1" height="1"/><rect x="0" y="57" width="1" height="1"/><rect x="7" y="57" width="1" height="1"/><rect x="0" y="58" width="1" height="1"/><rect x="7" y="58" width="1" height="1"/><rect x="1" y="59" width="1" height="1"/><rect x="6" y="59" width="1" height="1"/><rect x="2" y="60" width="1" height="1"/><rect x="5" y="60" width="1" height="1"/><rect x="3" y="61" width="2" height="1"/><rect x="3" y="62" width="2" height="1"/><rect x="2" y="63" width="1" height="1"/><rect x="5" y="63" width="1" height="1"/><rect x="1" y="64" width="1" height="1"/><rect x="6" y="64" width="1" height="1"/><rect x="0" y="65" width="1" height="1"/><rect x="7" y="65" width="1" height="1"/><rect x="0" y="66" width="1" height="1"/><rect x="7" y="66" width="1" height="1"/><rect x="1" y="67" width="1" height="1"/><rect x="6" y="67" width="1" height="1"/><rect x="2" y="68" width="1" height="1"/><rect x="5" y="68" width="1" height="1"/><rect x="3" y="69" width="2" height="1"/><rect x="3" y="70" width="2" height="1"/><rect x="2" y="71" width="1" height="1"/><rect x="5" y="71" width="1" height="1"/><rect x="1" y="72" width="1" height="1"/><rect x="6" y="72" width="1" height="1"/><rect x="0" y="73" width="1" height="1"/><rect x="7" y="73" width="1" height="1"/><rect x="0" y="74" width="1" height="1"/><rect x="7" y="74" width="1" height="1"/><rect x="1" y="75" width="1" height="1"/><rect x="6" y="75" width="1" height="1"/><rect x="2" y="76" width="1" height="1"/><rect x="5" y="76" width="1" height="1"/><rect x="3" y="77" width="2" height="1"/><rect x="3" y="78" width="2" height="1"/><rect x="2" y="79" width="1" height="1"/><rect x="5" y="79" width="1" height="1"/><rect x="1" y="80" width="1" height="1"/><rect x="6" y="80" width="1" height="1"/><rect x="0" y="81" width="1" height="1"/><rect x="7" y="81" width="1" height="1"/><rect x="0" y="82" width="1" height="1"/><rect x="7" y="82" width="1" height="1"/><rect x="1" y="83" width="1" height="1"/><rect x="6" y="83" width="1" height="1"/><rect x="2" y="84" width="1" height="1"/><rect x="5" y="84" width="1" height="1"/><rect x="3" y="85" width="2" height="1"/><rect x="3" y="86" width="2" height="1"/><rect x="2" y="87" width="1" height="1"/><rect x="5" y="87" width="1" height="1"/><rect x="1" y="88" width="1" height="1"/><rect x="6" y="88" width="1" height="1"/><rect x="0" y="89" width="1" height="1"/><rect x="7" y="89" width="1" height="1"/><rect x="0" y="90" width="1" height="1"/><rect x="7" y="90" width="1" height="1"/><rect x="1" y="91" width="1" height="1"/><rect x="6" y="91" width="1" height="1"/><rect x="2" y="92" width="1" height="1"/><rect x="5" y="92" width="1" height="1"/><rect x="3" y="93" width="2" height="1"/><rect x="3" y="94" width="2" height="1"/><rect x="2" y="95" width="1" height="1"/><rect x="5" y="95" width="1" height="1"/><rect x="1" y="96" width="1" height="1"/><rect x="6" y="96" width="1" height="1"/><rect x="0" y="97" width="1" height="1"/><rect x="7" y="97" width="1" height="1"/><rect x="0" y="98" width="1" height="1"/><rect x="7" y="98" width="1" height="1"/><rect x="1" y="99" width="1" height="1"/><rect x="6" y="99" width="1" height="1"/><rect x="2" y="100" width="1" height="1"/><rect x="5" y="100" width="1" height="1"/><rect x="3" y="101" width="2" height="1"/><rect x="3" y="102" width="2" height="1"/><rect x="2" y="103" width="1" height="1"/><rect x="5" y="103" width="1" height="1"/><rect x="1" y="104" width="1" height="1"/><rect x="6" y="104" width="1" height="1"/><rect x="0" y="105" width="1" height="1"/><rect x="7" y="105" width="1" height="1"/><rect x="3" y="106" width="2" height="1"/><rect x="2" y="107" width="1" height="1"/><rect x="5" y="107" width="1" height="1"/><rect x="1" y="108" width="1" height="1"/><rect x="6" y="108" width="1" height="1"/><rect x="0" y="109" width="1" height="1"/><rect x="7" y="109" width="1" height="1"/><rect x="0" y="110" width="1" height="1"/><rect x="7" y="110" width="1" height="1"/><rect x="1" y="111" width="1" height="1"/><rect x="6" y="111" width="1" height="1"/><rect x="2" y="112" width="1" height="1"/><rect x="5" y="112" width="1" height="1"/><rect x="3" y="113" width="2" height="1"/><rect x="3" y="114" width="2" height="1"/><rect x="2" y="115" width="1" height="1"/><rect x="5" y="115" width="1" height="1"/><rect x="1" y="116" width="1" height="1"/><rect x="6" y="116" width="1" height="1"/><rect x="0" y="117" width="1" height="1"/><rect x="7" y="117" width="1" height="1"/><rect x="0" y="118" width="1" height="1"/><rect x="7" y="118" width="1" height="1"/><rect x="1" y="119" width="1" height="1"/><rect x="6" y="119" width="1" height="1"/><rect x="2" y="120" width="1" height="1"/><rect x="5" y="120" width="1" height="1"/><rect x="3" y="121" width="2" height="1"/><rect x="3" y="122" width="2" height="1"/><rect x="2" y="123" width="1" height="1"/><rect x="5" y="123" width="1" height="1"/><rect x="1" y="124" width="1" height="1"/><rect x="6" y="124" width="1" height="1"/><rect x="0" y="125" width="1" height="1"/><rect x="7" y="125" width="1" height="1"/><rect x="0" y="126" width="1" height="1"/><rect x="7" y="126" width="1" height="1"/><rect x="1" y="127" width="1" height="1"/><rect x="6" y="127" width="1" height="1"/><rect x="2" y="128" width="1" height="1"/><rect x="5" y="128" width="1" height="1"/><rect x="3" y="129" width="2" height="1"/><rect x="3" y="130" width="2" height="1"/><rect x="2" y="131" width="1" height="1"/><rect x="5" y="131" width="1" height="1"/><rect x="1" y="132" width="1" height="1"/><rect x="6" y="132" width="1" height="1"/><rect x="0" y="133" width="1" height="1"/><rect x="7" y="133" width="1" height="1"/><rect x="0" y="134" width="1" height="1"/><rect x="7" y="134" width="1" height="1"/><rect x="1" y="135" width="1" height="1"/><rect x="6" y="135" width="1" height="1"/><rect x="2" y="136" width="1" height="1"/><rect x="5" y="136" width="1" height="1"/><rect x="3" y="137" width="2" height="1"/><rect x="3" y="138" width="2" height="1"/><rect x="2" y="139" width="1" height="1"/><rect x="5" y="139" width="1" height="1"/><rect x="1" y="140" width="1" height="1"/><rect x="6" y="140" width="1" height="1"/><rect x="0" y="141" width="1" height="1"/><rect x="7" y="141" width="1" height="1"/><rect x="0" y="142" width="1" height="1"/><rect x="7" y="142" width="1" height="1"/><rect x="1" y="143" width="1" height="1"/><rect x="6" y="143" width="1" height="1"/><rect x="2" y="144" width="1" height="1"/><rect x="5" y="144" width="1" height="1"/><rect x="3" y="145" width="2" height="1"/><rect x="3" y="146" width="2" height="1"/><rect x="2" y="147" width="1" height="1"/><rect x="5" y="147" width="1" height="1"/><rect x="1" y="148" width="1" height="1"/><rect x="6" y="148" width="1" height="1"/><rect x="0" y="149" width="1" height="1"/><rect x="7" y="149" width="1" height="1"/><rect x="0" y="150" width="1" height="1"/><rect x="7" y="150" width="1" height="1"/><rect x="1" y="151" width="1" height="1"/><rect x="6" y="151" width="1" height="1"/><rect x="2" y="152" width="1" height="1"/><rect x="5" y="152" width="1" height="1"/><rect x="3" y="153" width="2" height="1"/><rect x="2" y="154" width="1" height="1"/><rect x="5" y="154" width="1" height="1"/><rect x="1" y="155" width="1" height="1"/><rect x="6" y="155" width="1" height="1"/><rect x="0" y="156" width="1" height="1"/><rect x="7" y="156" width="1" height="1"/><rect x="0" y="157" width="1" height="1"/><rect x="7" y="157" width="1" height="1"/><rect x="1" y="158" width="1" height="1"/><rect x="6" y="158" width="1" height="1"/><rect x="2" y="159" width="1" height="1"/><rect x="5" y="159" width="1" height="1"/><rect x="3" y="160" width="2" height="1"/><rect x="3" y="161" width="2" height="1"/><rect x="2" y="162" width="1" height="1"/><rect x="5" y="162" width="1" height="1"/><rect x="1" y="163" width="1" height="1"/><rect x="6" y="163" width="1" height="1"/><rect x="0" y="164" width="1" height="1"/><rect x="7" y="164" width="1" height="1"/><rect x="0" y="165" width="1" height="1"/><rect x="7" y="165" width="1" height="1"/><rect x="3" y="166" width="2" height="1"/><rect x="2" y="167" width="1" height="1"/><rect x="5" y="167" width="1" height="1"/><rect x="1" y="168" width="1" height="1"/><rect x="6" y="168" width="1" height="1"/><rect x="0" y="169" width="1" height="1"/><rect x="7" y="169" width="1" height="1"/><rect x="0" y="170" width="1" height="1"/><rect x="7" y="170" width="1" height="1"/><rect x="1" y="171" width="1" height="1"/><rect x="6" y="171" width="1" height="1"/><rect x="2" y="172" width="1" height="1"/><rect x="5" y="172" width="1" height="1"/><rect x="3" y="173" width="2" height="1"/><rect x="3" y="174" width="2" height="1"/><rect x="2" y="175" width="1" height="1"/><rect x="5" y="175" width="1" height="1"/><rect x="1" y="176" width="1" height="1"/><rect x="6" y="176" width="1" height="1"/><rect x="3" y="177" width="2" height="1"/><rect x="2" y="178" width="1" height="1"/><rect x="5" y="178" width="1" height="1"/><rect x="1" y="179" width="1" height="1"/><rect x="6" y="179" width="1" height="1"/><rect x="0" y="180" width="1" height="1"/><rect x="7" y="180" width="1" height="1"/><rect x="0" y="181" width="1" height="1"/><rect x="7" y="181" width="1" height="1"/><rect x="1" y="182" width="1" height="1"/><rect x="6" y="182" width="1" height="1"/><rect x="2" y="183" width="1" height="1"/><rect x="5" y="183" width="1" height="1"/><rect x="3" y="184" width="2" height="1"/><rect x="2" y="185" width="1" height="1"/><rect x="5" y="185" width="1" height="1"/><rect x="1" y="186" width="1" height="1"/><rect x="6" y="186" width="1" height="1"/><rect x="0" y="187" width="1" height="1"/><rect x="7" y="187" width="1" height="1"/><rect x="0" y="188" width="1" height="1"/><rect x="7" y="188" width="1" height="1"/><rect x="1" y="189" width="1" height="1"/><rect x="6" y="189" width="1" height="1"/><rect x="3" y="190" width="2" height="1"/><rect x="2" y="191" width="1" height="1"/><rect x="5" y="191" width="1" height="1"/><rect x="1" y="192" width="1" height="1"/><rect x="6" y="192" width="1" height="1"/><rect x="3" y="193" width="2" height="1"/><rect x="2" y="194" width="1" height="1"/><rect x="5" y="194" width="1" height="1"/><rect x="1" y="195" width="1" height="1"/><rect x="6" y="195" width="1" height="1"/><rect x="0" y="196" width="1" height="1"/><rect x="7" y="196" width="1" height="1"/><rect x="0" y="197" width="1" height="1"/><rect x="7" y="197" width="1" height="1"/></g></pattern>
<clipPath id="hc"><rect x="693" y="590" width="340" height="162"/><rect x="845" y="572" width="36" height="198"/></clipPath>
</defs>
<rect x="252" y="463" width="1222" height="416" fill="#000"/>
<path d="M522 483H1204A9 9 0 0 1 1213 492V850A9 9 0 0 1 1204 859H522A9 9 0 0 1 513 850V492A9 9 0 0 1 522 483ZM531 501V841H1195V501Z" fill="#008000" fill-rule="evenodd"/>
<rect x="550" y="523" width="310" height="296" fill="#800080"/>
<rect x="866" y="523" width="310" height="296" fill="#800080"/>
<rect x="587" y="560" width="236" height="222" fill="#ff0000"/>
<rect x="903" y="560" width="236" height="222" fill="#ff0000"/>
<rect x="823" y="590" width="80" height="162" fill="#800080"/>
<path d="M675 554H1051A18 18 0 0 1 1069 572V770A18 18 0 0 1 1051 788H675A18 18 0 0 1 657 770V572A18 18 0 0 1 675 554ZM693 590V752H1033V590Z" fill="#ff00ff" fill-rule="evenodd"/>
<g fill="#008000">
<rect x="845" y="573" width="36" height="197"/>
<circle cx="863" cy="573" r="18"/>
<circle cx="863" cy="770" r="18"/>
<rect x="765" y="653" width="197" height="36"/>
<circle cx="765" cy="671" r="18"/>
<circle cx="962" cy="671" r="18"/>
</g>
<g stroke="#ffc8a8" stroke-width="3" fill="none" shape-rendering="geometricPrecision">
<path d="M699.6 665.2L706.5 658.6V684.8" stroke-width="2.8"/>
<path d="M1014.6 664C1014.6 659.6 1017.2 657.2 1021 657.2C1025 657.2 1027.4 659.6 1027.4 663.4C1027.4 667.6 1024.6 670.8 1014.6 683.6H1029" stroke-width="2.3"/>
</g>
<rect x="693" y="572" width="340" height="198" fill="url(#hp)" clip-path="url(#hc)"/>
</svg><div style="position:absolute;left:262px;top:838px;width:31px;height:31px;background:#efefef;border:1px solid #9a9a9a;box-sizing:border-box"></div><div class="t" style="left:268px;top:844.15px;color:#000;font-size:14px;font-weight:normal;letter-spacing:0.0px;">3D</div><div style="position:absolute;left:264px;top:879px;width:64px;height:25px;background:#525252;border:1px solid #2c2c2c;border-top:none;border-radius:0 0 6px 6px;box-sizing:border-box"></div><div class="t" style="left:273px;top:881.15px;color:#e4e4e4;font-size:14px;font-weight:normal;letter-spacing:-0.5px;">Preview</div><div style="position:absolute;left:327px;top:879px;width:67px;height:25px;background:#3a3a3a;border:1px solid #2c2c2c;border-top:none;border-radius:0 0 6px 6px;box-sizing:border-box"></div><div class="t" style="left:336px;top:881.15px;color:#e4e4e4;font-size:14px;font-weight:normal;letter-spacing:-0.5px;">Lifecycle</div><div style="position:absolute;left:393px;top:879px;width:68px;height:25px;background:#3a3a3a;border:1px solid #2c2c2c;border-top:none;border-radius:0 0 6px 6px;box-sizing:border-box"></div><div class="t" style="left:402px;top:881.15px;color:#e4e4e4;font-size:14px;font-weight:normal;letter-spacing:-0.286px;">Children</div><div style="position:absolute;left:460px;top:879px;width:92px;height:25px;background:#3a3a3a;border:1px solid #2c2c2c;border-top:none;border-radius:0 0 6px 6px;box-sizing:border-box"></div><div class="t" style="left:469px;top:881.15px;color:#e4e4e4;font-size:14px;font-weight:normal;letter-spacing:-0.267px;">Where-used</div><div style="position:absolute;left:551px;top:879px;width:56px;height:25px;background:#3a3a3a;border:1px solid #2c2c2c;border-top:none;border-radius:0 0 6px 6px;box-sizing:border-box"></div><div class="t" style="left:560px;top:881.15px;color:#e4e4e4;font-size:14px;font-weight:normal;letter-spacing:0.06px;">Origin</div><div style="position:absolute;left:1281px;top:953px;width:100px;height:40px;background:#535353;border:1px solid #262626;border-radius:5px;box-sizing:border-box"></div><div style="position:absolute;left:1386px;top:953px;width:100px;height:40px;background:#535353;border:1px solid #262626;border-radius:5px;box-sizing:border-box"></div><div style="position:absolute;left:0px;top:985px;width:1496px;height:5px;background:#1d2a2e"></div><div class="t" style="left:1321px;top:960.15px;color:#e4e4e4;font-size:14px;font-weight:normal;letter-spacing:-0.3px;">OK</div><div class="t" style="left:1416px;top:960.15px;color:#e4e4e4;font-size:14px;font-weight:normal;letter-spacing:-0.74px;">Cancel</div></body></html>
